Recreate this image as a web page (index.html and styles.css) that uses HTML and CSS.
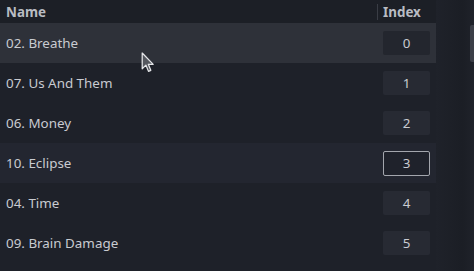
FILE: index.html
```html
<!DOCTYPE html>
<html lang="en">
<head>
    <meta charset="UTF-8">
    <title>Track Order</title>
    <link rel="stylesheet" href="styles.css">
</head>
<body>
    <div class="panel">
        <div class="list">
            <!-- Column headers -->
            <div class="row head">
                <div class="name">Name</div>
                <div class="index">Index</div>
            </div>

            <div class="row hover">
                <div class="name">02. Breathe</div>
                <div class="index"><span class="box">0</span></div>
            </div>
            <div class="row">
                <div class="name">07. Us And Them</div>
                <div class="index"><span class="box">1</span></div>
            </div>
            <div class="row">
                <div class="name">06. Money</div>
                <div class="index"><span class="box">2</span></div>
            </div>
            <div class="row alt">
                <div class="name">10. Eclipse</div>
                <div class="index"><span class="box focus">3</span></div>
            </div>
            <div class="row">
                <div class="name">04. Time</div>
                <div class="index"><span class="box">4</span></div>
            </div>
            <div class="row">
                <div class="name">09. Brain Damage</div>
                <div class="index"><span class="box">5</span></div>
            </div>
        </div>

        <div class="gutter">
            <div class="scrollbar"><div class="thumb"></div></div>
        </div>
    </div>

    <!-- Mouse pointer over the list -->
    <svg class="cursor" viewBox="0 0 14 21" width="15" height="22">
        <path d="M1 1 L1 16 L4.5 12.5 L7 18.5 L9.2 17.5 L6.8 11.8 L11.5 11.8 Z" fill="#55585f" stroke="#e4e5e8" stroke-width="1.2" stroke-linejoin="round"/>
    </svg>
</body>
</html>
```

FILE: styles.css
```css
body {
    margin: 0;
    background-color: #1e2129;
    font-family: 'Noto Sans', 'Open Sans', sans-serif;
    color: #c9cbd1;
    font-size: 13.4px;
    overflow: hidden;
}

.panel {
    display: flex;
    height: 271px;
}

/* List */
.list {
    width: 436px;
    flex-shrink: 0;
}

.row {
    display: flex;
    align-items: center;
    height: 40px;
}

.row .name {
    flex: 1;
    padding-left: 6px;
}

.row .index {
    width: 59px;
    box-sizing: border-box;
    padding-left: 6px;
}

.row.head {
    height: 23px;
    font-weight: 700;
    color: #b9bcc3;
    background-color: #1c1f26;
}

.row.head .index {
    border-left: 1px solid #3a3d45;
    height: 16px;
    line-height: 16px;
    padding-left: 5px;
}

.row.hover {
    background-color: #2e3139;
}

.row.alt {
    background-color: #232630;
}

/* Index spin boxes */
.box {
    display: block;
    width: 47px;
    height: 24px;
    line-height: 24px;
    box-sizing: border-box;
    text-align: center;
    background-color: #272a33;
    color: #c9cbd1;
    border-radius: 2px;
}

.row.hover .box {
    background-color: #23262e;
}

.box.focus {
    border: 1px solid #a3a6ad;
    line-height: 22px;
    height: 25px;
    background-color: #1f222b;
}

/* Right gutter with scrollbar */
.gutter {
    flex: 1;
    display: flex;
    justify-content: flex-end;
    background: linear-gradient(to right, #1f222a, #1b1e25 70%, #1f222a);
}

.scrollbar {
    width: 4px;
    padding-top: 25px;
}

.thumb {
    height: 37px;
    background-color: #3b3e47;
    border-radius: 2px 0 0 2px;
}

.cursor {
    position: absolute;
    left: 141px;
    top: 52px;
}
```
